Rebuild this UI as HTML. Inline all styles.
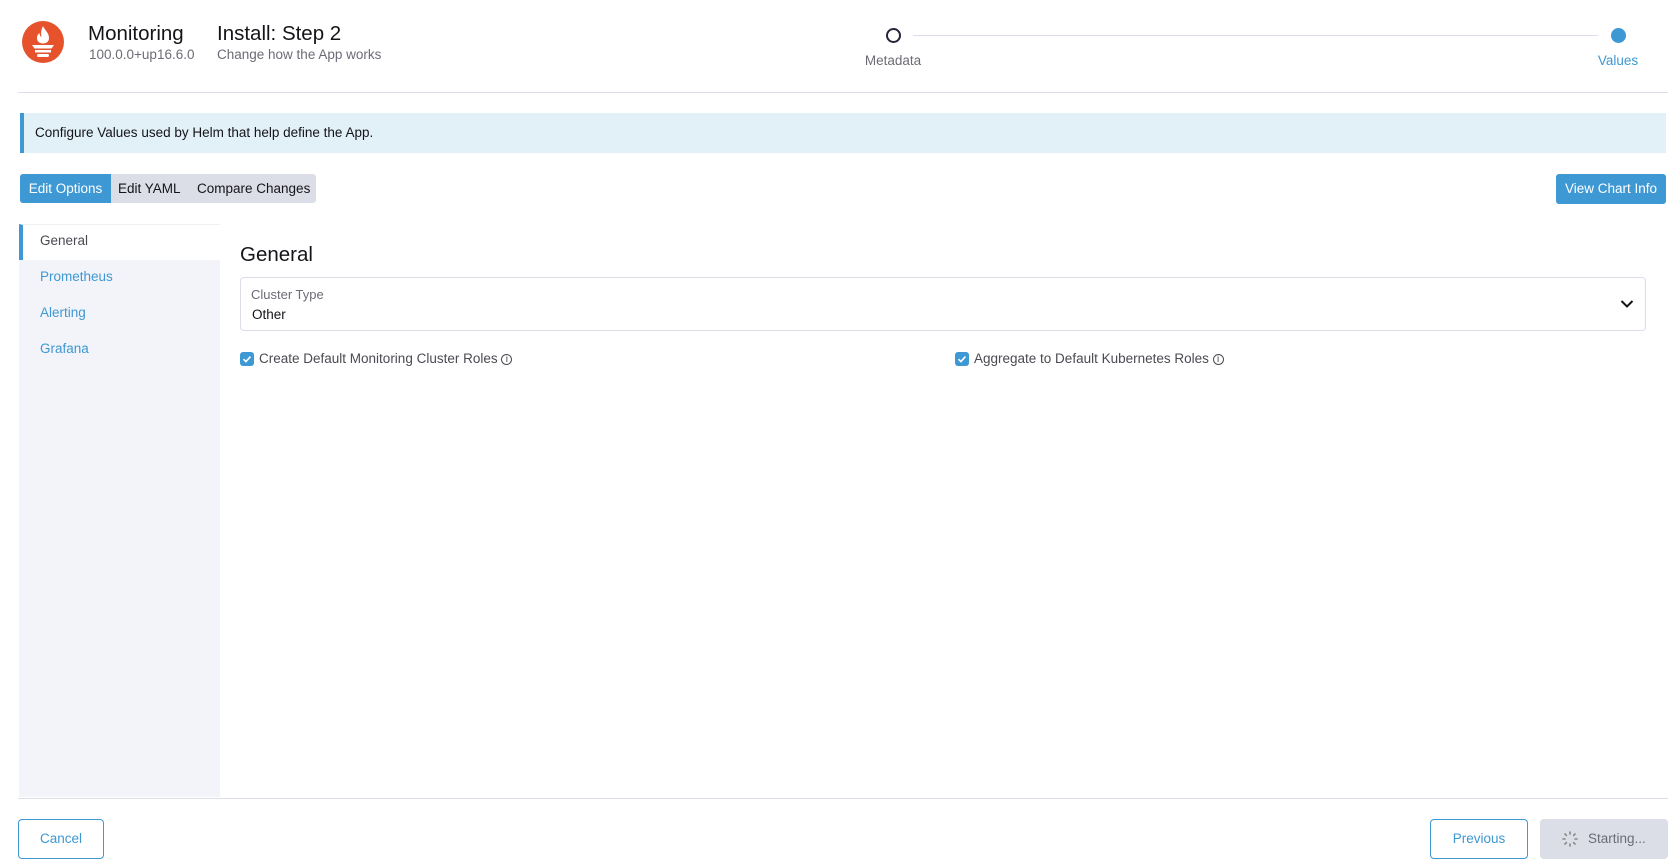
<!DOCTYPE html>
<html><head><meta charset="utf-8"><style>
*{box-sizing:border-box;margin:0;padding:0}
body{width:1679px;height:868px;background:#fff;font-family:"Liberation Sans",sans-serif;color:#141419;position:relative;overflow:hidden;font-size:13.5px}
.a{position:absolute;white-space:nowrap}
.blue{color:#3d98d3}
</style></head><body>
<svg class="a" style="left:22px;top:21px" width="42" height="42" viewBox="0 0 42 42">
<circle cx="21" cy="21" r="21" fill="#e6522c"/>
<path d="M21 5c1.5 4 6 6.5 6 12 0 3.5-2.5 5.5-6 5.5s-6-2-6-5.5c0-2.5 1.2-4 2.5-5 0 2 .8 3.5 2 4-1-4 0-8 1.5-11z" fill="#fff"/>
<path d="M10 24h22l-2.5 3.5h-17z" fill="#fff"/>
<rect x="13" y="29" width="16" height="2.5" fill="#fff"/>
<rect x="15" y="33" width="12" height="3" rx="1.5" fill="#fff"/>
</svg>
<div class="a" style="left:88px;top:22px;font-size:20.5px">Monitoring</div>
<div class="a" style="left:89px;top:47px;font-size:13.5px;color:#6c6c76">100.0.0+up16.6.0</div>
<div class="a" style="left:217px;top:22px;font-size:20.5px">Install: Step 2</div>
<div class="a" style="left:217px;top:47px;font-size:13.5px;color:#6c6c76">Change how the App works</div>
<div class="a" style="left:886px;top:28px;width:15px;height:15px;border:2px solid #23253a;border-radius:50%"></div>
<div class="a" style="left:913px;top:35px;width:685px;height:1px;background:#dcdee7"></div>
<div class="a" style="left:1611px;top:28px;width:15px;height:15px;background:#3d98d3;border-radius:50%"></div>
<div class="a" style="left:863px;top:53px;width:60px;text-align:center;color:#6c6c76">Metadata</div>
<div class="a blue" style="left:1588px;top:53px;width:60px;text-align:center">Values</div>
<div class="a" style="left:18px;top:92px;width:1650px;height:1px;background:#dcdee7"></div>
<div class="a" style="left:20px;top:113px;width:1646px;height:40px;background:#e2f0f8;border-left:4px solid #3d98d3"></div>
<div class="a" style="left:35px;top:125px">Configure Values used by Helm that help define the App.</div>
<div class="a" style="left:20px;top:174px;width:296px;height:29px;background:#dcdee7;border-radius:3px"></div>
<div class="a" style="left:20px;top:174px;width:91px;height:29px;background:#3d98d3;border-radius:3px 0 0 3px;color:#fff;line-height:29px;text-align:center">Edit Options</div>
<div class="a" style="left:118px;top:174px;line-height:29px">Edit YAML</div>
<div class="a" style="left:197px;top:174px;line-height:29px">Compare Changes</div>
<div class="a" style="left:1556px;top:174px;width:110px;height:30px;background:#3d98d3;border-radius:3px;color:#fff;line-height:30px;text-align:center">View Chart Info</div>
<div class="a" style="left:19px;top:224px;width:201px;height:573px;background:#f3f4f9"></div>
<div class="a" style="left:19px;top:224px;width:201px;height:36px;background:#fff;border-left:4px solid #3d98d3;border-top:1px solid #eef0f4"></div>
<div class="a" style="left:40px;top:233px;color:#4a4a52">General</div>
<div class="a blue" style="left:40px;top:269px">Prometheus</div>
<div class="a blue" style="left:40px;top:305px">Alerting</div>
<div class="a blue" style="left:40px;top:341px">Grafana</div>
<div class="a" style="left:240px;top:243px;font-size:20.5px">General</div>
<div class="a" style="left:240px;top:277px;width:1406px;height:54px;border:1px solid #dcdee7;border-radius:4px"></div>
<div class="a" style="left:251px;top:287px;font-size:13px;color:#6c6c76">Cluster Type</div>
<div class="a" style="left:252px;top:307px">Other</div>
<svg class="a" style="left:1620px;top:299px" width="14" height="10" viewBox="0 0 14 10"><path d="M1.5 2l5.5 5.5L12.5 2" stroke="#141419" stroke-width="2" fill="none"/></svg>
<svg class="a" style="left:240px;top:352px" width="14" height="14" viewBox="0 0 14 14"><rect width="14" height="14" rx="3" fill="#3d98d3"/><path d="M3.5 7.2l2.4 2.4 4.6-5" stroke="#fff" stroke-width="1.6" fill="none"/></svg>
<div class="a" style="left:259px;top:351px;color:#4a4a52">Create Default Monitoring Cluster Roles <span style="font-size:10px;display:inline-block;width:11px;height:11px;border:1px solid #4a4a52;border-radius:50%;line-height:9px;text-align:center;vertical-align:1px">i</span></div>
<svg class="a" style="left:955px;top:352px" width="14" height="14" viewBox="0 0 14 14"><rect width="14" height="14" rx="3" fill="#3d98d3"/><path d="M3.5 7.2l2.4 2.4 4.6-5" stroke="#fff" stroke-width="1.6" fill="none"/></svg>
<div class="a" style="left:974px;top:351px;color:#4a4a52">Aggregate to Default Kubernetes Roles <span style="font-size:10px;display:inline-block;width:11px;height:11px;border:1px solid #4a4a52;border-radius:50%;line-height:9px;text-align:center;vertical-align:1px">i</span></div>
<div class="a" style="left:18px;top:798px;width:1650px;height:1px;background:#dcdee7"></div>
<div class="a blue" style="left:18px;top:819px;width:86px;height:40px;border:1px solid #3d98d3;border-radius:4px;line-height:38px;text-align:center">Cancel</div>
<div class="a blue" style="left:1430px;top:819px;width:98px;height:40px;border:1px solid #3d98d3;border-radius:4px;line-height:38px;text-align:center">Previous</div>
<div class="a" style="left:1540px;top:819px;width:128px;height:40px;background:#dcdee7;border-radius:4px;line-height:40px;color:#6c6c76;padding-left:48px">Starting...</div>
<svg class="a" style="left:1562px;top:831px" width="16" height="16" viewBox="0 0 16 16" stroke="#888" stroke-width="1.6" stroke-linecap="round"><path d="M8 1v2M8 13v2M1 8h2M13 8h2M3 3l1.4 1.4M11.6 11.6L13 13M3 13l1.4-1.4M11.6 4.4L13 3"/></svg>
</body></html>
